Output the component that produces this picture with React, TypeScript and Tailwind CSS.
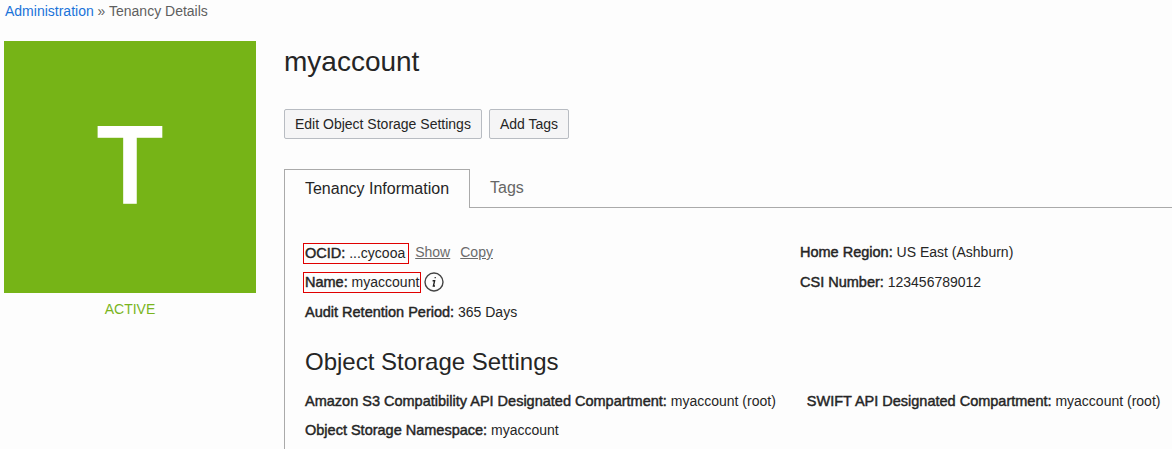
function L({ children }: { children: React.ReactNode }) {
  return <span className="text-[14.5px] [-webkit-text-stroke:0.45px_#252525]">{children}</span>;
}

export default function App() {
  return (
    <div className="w-[1172px] h-[449px] overflow-hidden bg-[#fdfdfd] text-[#252525] text-[14px] leading-[20px] font-['Liberation_Sans',Arial,sans-serif]">
      <div className="h-[41px] pl-[5px] pt-[1px] text-[#5f5f5f]">
        <span className="text-[#1a73d9]">Administration</span> » Tenancy Details
      </div>
      <div className="flex">
        <div className="ml-[4px] w-[252px] flex flex-col items-center">
          <div className="w-[252px] h-[252px] pb-[5px] bg-[#76b417] flex items-center justify-center text-white text-[108px] leading-none [-webkit-text-stroke:3.5px_#ffffff]">
            T
          </div>
          <div className="mt-[6px] text-[#7ab51d]">ACTIVE</div>
        </div>
        <div className="ml-[28px] flex-1 min-w-0">
          <h1 className="text-[28px] leading-[42px] h-[68px]">myaccount</h1>
          <div className="flex gap-[7px]">
            <button className="h-[30px] px-[10px] rounded-[2px] border border-[#b8bcc2] bg-[#f5f5f6]">Edit Object Storage Settings</button>
            <button className="h-[30px] px-[10px] rounded-[2px] border border-[#b8bcc2] bg-[#f5f5f6]">Add Tags</button>
          </div>
          <div className="mt-[30px] flex h-[39px] text-[16px]">
            <div className="w-[186px] h-[39px] border border-b-0 border-[#aaaaaa] bg-[#fdfdfd] flex items-center justify-center">Tenancy Information</div>
            <div className="flex-1 border-b border-[#aaaaaa] pl-[20px] pt-[9px] text-[#666666]">Tags</div>
          </div>
          <div className="border-l border-[#aaaaaa] pl-[18px] pt-[35px] h-[300px]">
            <div className="flex">
              <div className="w-[497px]">
                <div className="h-[29px] flex items-start">
                  <span className="border border-[#e00000] h-[21px] pl-[1px] pr-[3px] leading-[18px]"><L>OCID:</L> ...cycooa</span>
                  <span className="ml-[6px] -mt-[1px] underline text-[#6b6b6b]">Show</span>
                  <span className="ml-[10px] -mt-[1px] underline text-[#6b6b6b]">Copy</span>
                </div>
                <div className="h-[30px] flex items-start">
                  <span className="border border-[#e00000] h-[21px] pl-[1px] pr-[1px] leading-[18px]"><L>Name:</L> myaccount</span>
                  <svg width="20" height="20" viewBox="0 0 20 20" className="ml-[3px]">
                    <circle cx="10" cy="10" r="9" fill="none" stroke="#444" strokeWidth="1.4" />
                    <path d="M10.6 5.6h1.2M8.6 8.8h2l-1.2 5.2h1.6" fill="none" stroke="#222" strokeWidth="1.4" />
                  </svg>
                </div>
                <div className="pl-[2px]"><L>Audit Retention Period:</L> 365 Days</div>
              </div>
              <div className="-mt-[1px]">
                <div className="h-[30px]"><L>Home Region:</L> US East (Ashburn)</div>
                <div><L>CSI Number:</L> 123456789012</div>
              </div>
            </div>
            <h2 className="mt-[24px] ml-[2px] text-[24px] leading-[32px]">Object Storage Settings</h2>
            <div className="mt-[13px] ml-[2px] flex gap-[31px] whitespace-nowrap">
              <div><L>Amazon S3 Compatibility API Designated Compartment:</L> myaccount (root)</div>
              <div><L>SWIFT API Designated Compartment:</L> myaccount (root)</div>
            </div>
            <div className="mt-[9px] ml-[2px]"><L>Object Storage Namespace:</L> myaccount</div>
          </div>
        </div>
      </div>
    </div>
  );
}
